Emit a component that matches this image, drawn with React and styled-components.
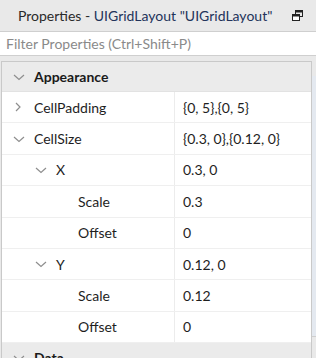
import styled, { createGlobalStyle } from "styled-components";

const GlobalStyle = createGlobalStyle`
  html, body {
    margin: 0;
    padding: 0;
    background: #e9e9e9;
  }
  body {
    font-family: "Lato", "Open Sans", sans-serif;
    color: #1c1c1c;
  }
`;

const rows = [
  { name: "CellPadding", value: "{0, 5},{0, 5}", level: 0, chevron: "right" },
  { name: "CellSize", value: "{0.3, 0},{0.12, 0}", level: 0, chevron: "down" },
  { name: "X", value: "0.3, 0", level: 1, chevron: "down" },
  { name: "Scale", value: "0.3", level: 2 },
  { name: "Offset", value: "0", level: 2 },
  { name: "Y", value: "0.12, 0", level: 1, chevron: "down" },
  { name: "Scale", value: "0.12", level: 2 },
  { name: "Offset", value: "0", level: 2 },
];

function Chevron({ dir }) {
  if (dir === "right") {
    return (
      <svg width="10" height="10" viewBox="0 0 10 10">
        <path d="M3 1 L7 5 L3 9" fill="none" stroke="#8e8e8e" strokeWidth="1.2" />
      </svg>
    );
  }
  return (
    <svg width="12" height="10" viewBox="0 0 12 10">
      <path d="M1 3 L6 7.5 L11 3" fill="none" stroke="#8e8e8e" strokeWidth="1.2" />
    </svg>
  );
}

function RestoreIcon() {
  return (
    <svg width="11" height="11" viewBox="0 0 11 11">
      <rect x="3.5" y="0.5" width="7" height="6" fill="none" stroke="#222" strokeWidth="1" />
      <rect x="3.5" y="0.5" width="7" height="2" fill="#222" />
      <rect x="0.5" y="4.5" width="7" height="6" fill="#fff" stroke="#222" strokeWidth="1" />
      <rect x="0.5" y="4.5" width="7" height="2" fill="#222" />
    </svg>
  );
}

export default function App() {
  return (
    <>
      <GlobalStyle />
      <Panel>
        <TitleBar>
          <Title>
            Properties - <Accent>UIGridLayout "UIGridLayout"</Accent>
          </Title>
          <RestoreIcon />
        </TitleBar>
        <FilterBox>Filter Properties (Ctrl+Shift+P)</FilterBox>
        <TreeArea>
          <Tree>
            <Header>
              <ChevronSlot $level={0}>
                <Chevron dir="down" />
              </ChevronSlot>
              Appearance
            </Header>
            {rows.map((r, i) => (
              <Row key={i}>
                <NameCell $level={r.level}>
                  <ChevronSlot $level={r.level}>
                    {r.chevron && <Chevron dir={r.chevron} />}
                  </ChevronSlot>
                  {r.name}
                </NameCell>
                <ValueCell>{r.value}</ValueCell>
              </Row>
            ))}
            <Header>
              <ChevronSlot $level={0}>
                <Chevron dir="down" />
              </ChevronSlot>
              Data
            </Header>
          </Tree>
          <SideStrip>
            <StripFill />
          </SideStrip>
        </TreeArea>
      </Panel>
    </>
  );
}

const Panel = styled.div`
  width: 316px;
  height: 358px;
  overflow: hidden;
  background: #e9e9e9;
`;

const TitleBar = styled.div`
  height: 31px;
  display: flex;
  align-items: center;
  justify-content: space-between;
  padding: 0 13px 0 18px;
  box-sizing: border-box;
`;

const Title = styled.div`
  font-size: 14px;
  color: #2a2a2a;
  white-space: nowrap;
`;

const Accent = styled.span`
  color: #22335a;
`;

const FilterBox = styled.div`
  height: 25px;
  background: #ffffff;
  border-top: 1px solid #cfcfcf;
  border-bottom: 1px solid #cfcfcf;
  box-sizing: border-box;
  padding-left: 6px;
  display: flex;
  align-items: center;
  font-size: 14px;
  color: #8a8a8a;
  white-space: nowrap;
`;

const TreeArea = styled.div`
  margin-top: 5px;
  display: flex;
`;

const Tree = styled.div`
  width: 311px;
  margin-left: 1px;
  border-left: 1px solid #c9c9c9;
  border-top: 1px solid #c9c9c9;
  border-right: 1px solid #c9c9c9;
  box-sizing: border-box;
  background: #ffffff;
`;

const SideStrip = styled.div`
  flex: 1;
  padding-top: 15px;
`;

const StripFill = styled.div`
  height: 260px;
  background: #e4e9f0;
  border-bottom: 1px solid #cfcfcf;
`;

const ChevronSlot = styled.span`
  display: inline-flex;
  width: 21px;
  margin-left: ${(p) => 8 + p.$level * 22}px;
  align-items: center;
`;

const Header = styled.div`
  height: 30px;
  display: flex;
  align-items: center;
  background: #ebebeb;
  border-bottom: 1px solid #e2e2e2;
  font-size: 14px;
  font-weight: 700;
  color: #1a1a1a;
  padding-left: 3px;
  box-sizing: border-box;
`;

const Row = styled.div`
  height: 31.4px;
  display: grid;
  grid-template-columns: 173px 1fr;
  border-bottom: 1px solid #efefef;
  box-sizing: border-box;
  font-size: 14px;
`;

const NameCell = styled.div`
  display: flex;
  align-items: center;
  padding-left: 3px;
  border-right: 1px solid #ececec;
  white-space: nowrap;
  color: #1e1e1e;
`;

const ValueCell = styled.div`
  display: flex;
  align-items: center;
  padding-left: 8px;
  white-space: nowrap;
  color: #1e1e1e;
`;
